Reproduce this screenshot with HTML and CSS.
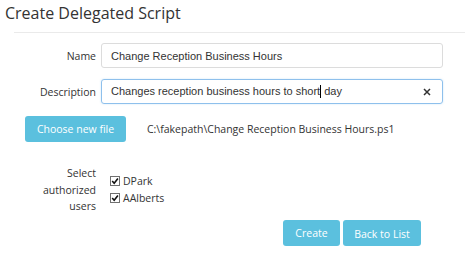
FILE: index.html
```html
<!DOCTYPE html>
<html>
<head>
<meta charset="utf-8">
<title>Create Delegated Script</title>
<link rel="stylesheet" href="styles.css">
</head>
<body>
<h2 class="title">Create Delegated Script</h2>
<hr class="rule">
<form class="form">
  <div class="row">
    <label class="lbl">Name</label>
    <div class="input">Change Reception Business Hours</div>
  </div>
  <div class="row row-desc">
    <label class="lbl">Description</label>
    <div class="input input-focus">
      <span>Changes reception business hours to short<span class="caret"></span> day</span>
      <svg class="clear" width="8" height="8" viewBox="0 0 8 8"><path d="M1 1 L7 7 M7 1 L1 7" stroke="#333" stroke-width="1.5" fill="none"/></svg>
    </div>
  </div>
  <div class="file-row">
    <span class="btn btn-file">Choose new file</span>
    <span class="path">C:\fakepath\Change Reception Business Hours.ps1</span>
  </div>
  <div class="row users-row">
    <div class="lbl lbl-multi">Select<br>authorized<br>users</div>
    <div class="checks">
      <div class="check">
        <svg class="box" width="10" height="10" viewBox="0 0 10 10"><rect x="0.5" y="0.5" width="9" height="9" fill="#fff" stroke="#707070"/><path d="M2.2 5 L4.2 7.2 L7.9 2.6" stroke="#111" stroke-width="1.6" fill="none"/></svg>
        <span>DPark</span>
      </div>
      <div class="check">
        <svg class="box" width="10" height="10" viewBox="0 0 10 10"><rect x="0.5" y="0.5" width="9" height="9" fill="#fff" stroke="#707070"/><path d="M2.2 5 L4.2 7.2 L7.9 2.6" stroke="#111" stroke-width="1.6" fill="none"/></svg>
        <span>AAlberts</span>
      </div>
    </div>
  </div>
  <div class="actions">
    <span class="btn btn-create">Create</span>
    <span class="btn btn-back">Back to List</span>
  </div>
</form>
</body>
</html>
```
FILE: styles.css
```css
body {
  margin: 0;
  background: #fff;
  color: #333;
  font-family: "Open Sans", sans-serif;
  font-size: 10.5px;
}
.title {
  margin: 0;
  padding: 1px 0 0 5px;
  font-size: 16px;
  font-weight: 400;
  line-height: 24px;
  color: #333;
}
.rule {
  margin: 7px 9px 0 14px;
  border: 0;
  border-top: 1px solid #eaeaea;
  height: 0;
}
.form {
  padding-top: 10px;
}
.row {
  display: flex;
  align-items: center;
}
.lbl {
  width: 96px;
  margin-right: 5px;
  text-align: right;
  flex-shrink: 0;
}
.input {
  width: 342px;
  height: 25px;
  box-sizing: border-box;
  border: 1px solid #dcdcdc;
  border-radius: 3px;
  padding: 0 9px;
  display: flex;
  align-items: center;
  font-family: "Liberation Sans", Arial, sans-serif;
  font-size: 11px;
  color: #333;
}
.row-desc {
  margin-top: 11px;
}
.input-focus {
  border-color: #8ec0ec;
  justify-content: space-between;
  box-shadow: 0 0 2px rgba(102, 175, 233, 0.35);
  padding-right: 11px;
}
.caret {
  display: inline-block;
  width: 0;
  height: 13px;
  border-left: 1px solid #000;
  vertical-align: -3px;
  margin-left: 0;
}
.file-row {
  display: flex;
  align-items: center;
  margin-top: 12px;
  padding-left: 25px;
}
.btn {
  display: inline-flex;
  align-items: center;
  justify-content: center;
  height: 26px;
  background: #5bc0de;
  color: #fff;
  border-radius: 3px;
}
.btn-file {
  width: 101px;
}
.path {
  margin-left: 21px;
}
.users-row {
  margin-top: 23px;
}
.lbl-multi {
  line-height: 16.5px;
}
.checks {
  margin-left: 9px;
}
.check {
  display: flex;
  align-items: center;
  gap: 3px;
  line-height: 17px;
}
.actions {
  display: flex;
  gap: 3px;
  margin-top: 5px;
  padding-left: 283px;
}
.btn-create {
  width: 57px;
}
.btn-back {
  width: 78px;
  padding-top: 2px;
  box-sizing: border-box;
}
```
